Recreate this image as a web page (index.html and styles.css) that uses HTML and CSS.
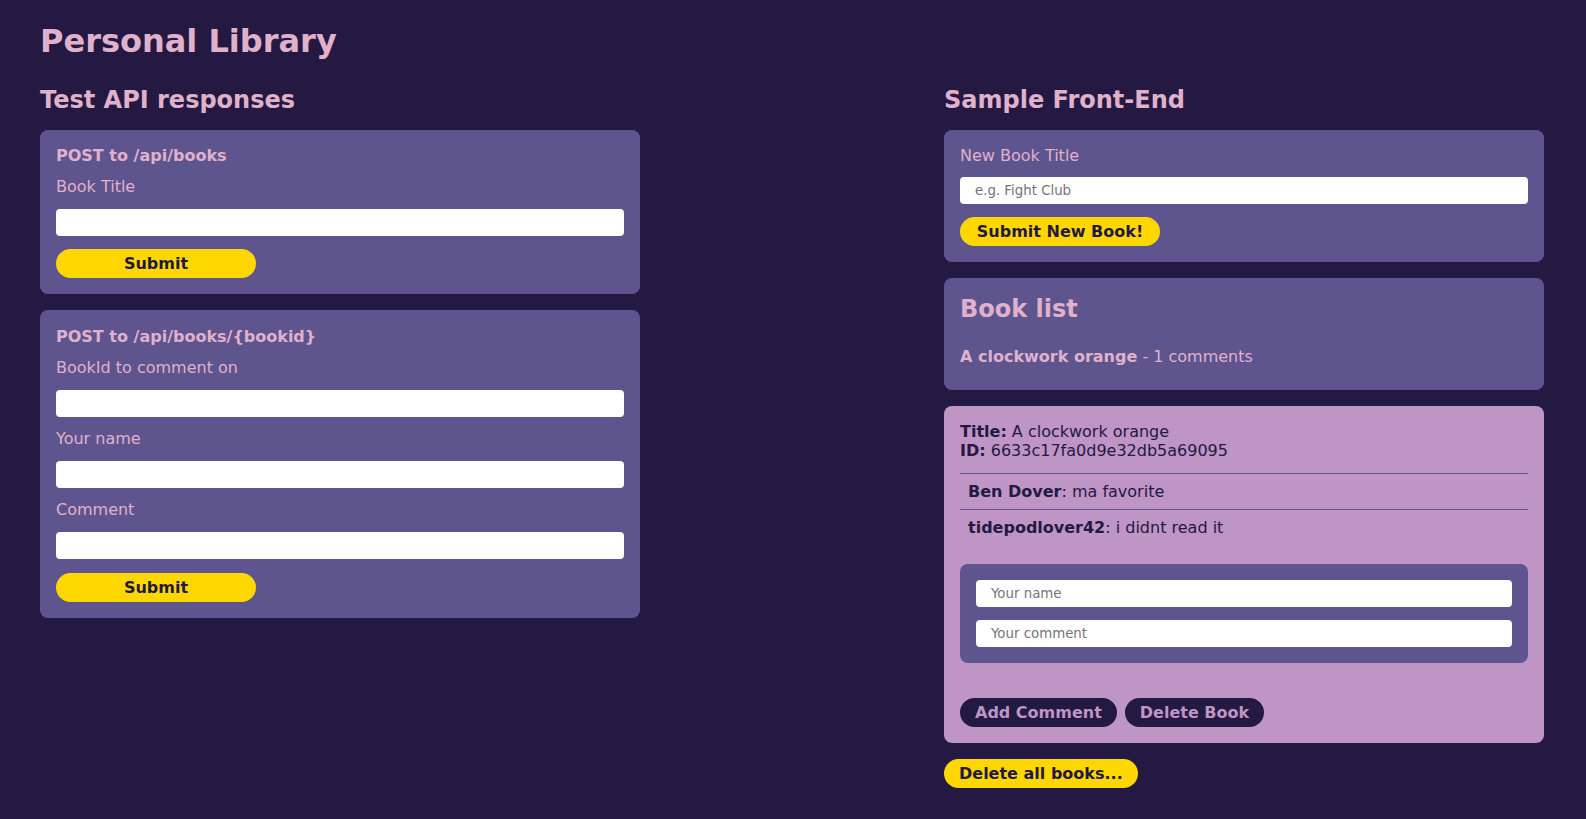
FILE: index.html
```html
<!DOCTYPE html>
<html lang="en">
<head>
<meta charset="utf-8">
<title>Personal Library</title>
<link rel="stylesheet" href="styles.css">
</head>
<body>
<h1 class="page-title">Personal Library</h1>
<div class="columns">
  <section class="column">
    <h2 class="col-title">Test API responses</h2>
    <form class="card">
      <h4 class="card-head">POST to /api/books</h4>
      <label class="field-label">Book Title</label>
      <input class="field" type="text">
      <button class="btn btn-yellow btn-wide" type="button">Submit</button>
    </form>
    <form class="card card-tall">
      <h4 class="card-head">POST to /api/books/{bookid}</h4>
      <label class="field-label">BookId to comment on</label>
      <input class="field" type="text">
      <label class="field-label">Your name</label>
      <input class="field" type="text">
      <label class="field-label">Comment</label>
      <input class="field" type="text">
      <button class="btn btn-yellow btn-wide" type="button">Submit</button>
    </form>
  </section>
  <section class="column">
    <h2 class="col-title">Sample Front-End</h2>
    <form class="card">
      <label class="field-label first">New Book Title</label>
      <input class="field field-new" type="text" placeholder="e.g. Fight Club">
      <div class="row"><button class="btn btn-yellow btn-min" type="button">Submit New Book!</button></div>
    </form>
    <div class="card">
      <h2 class="list-title">Book list</h2>
      <ul class="book-list">
        <li><b>A clockwork orange</b> - 1 comments</li>
      </ul>
    </div>
    <div class="card card-detail">
      <p class="detail"><b>Title:</b> A clockwork orange<br><b>ID:</b> 6633c17fa0d9e32db5a69095</p>
      <ul class="comments">
        <li><b>Ben Dover</b>: ma favorite</li>
        <li><b>tidepodlover42</b>: i didnt read it</li>
      </ul>
      <form class="comment-form">
        <input class="field" type="text" placeholder="Your name">
        <input class="field" type="text" placeholder="Your comment">
      </form>
      <div class="actions">
        <button class="btn btn-dark" type="button">Add Comment</button>
        <button class="btn btn-dark" type="button">Delete Book</button>
      </div>
    </div>
    <div class="row row-end"><button class="btn btn-yellow" type="button">Delete all books...</button></div>
  </section>
</div>
</body>
</html>
```
FILE: styles.css
```css
* { box-sizing: border-box; }
html, body { background: #231942; }
body {
  margin: 0;
  padding: 23px 42px 0 40px;
  font-family: "DejaVu Sans", sans-serif;
  font-size: 16px;
  color: #e0b1cb;
}
.page-title {
  margin: 0 0 26px;
  font-size: 32px;
  line-height: 37px;
  font-weight: bold;
}
.columns {
  display: flex;
  justify-content: space-between;
}
.column {
  width: 600px;
  display: flex;
  flex-direction: column;
}
.col-title {
  margin: 0 0 16px;
  font-size: 24px;
  line-height: 28px;
}
.card {
  background: #5e548e;
  border-radius: 8px;
  padding: 16px;
  margin: 0 0 16px;
  display: flex;
  flex-direction: column;
  align-items: flex-start;
}
.card-tall { padding-top: 17px; }
.card-tall .btn-wide { margin-top: 14px; }
.card-head {
  margin: 0;
  font-size: 16px;
  line-height: 19px;
  font-weight: bold;
}
.field-label {
  display: block;
  margin-top: 12px;
  line-height: 19px;
}
.field-label.first { margin-top: 0; }
.field {
  display: block;
  width: 100%;
  height: 27px;
  margin-top: 13px;
  border: none;
  border-radius: 4px;
  background: #fff;
  padding: 0 15px;
  font-family: "DejaVu Sans", sans-serif;
  font-size: 13.333px;
  color: #231942;
}
.field::placeholder { color: #757575; }
.field-new { margin-top: 12px; }
.btn {
  height: 29px;
  padding: 0 15px;
  border: none;
  border-radius: 15px;
  font-family: "DejaVu Sans", sans-serif;
  font-size: 16px;
  font-weight: bold;
  line-height: 29px;
}
.btn-yellow { background: #ffd700; color: #231942; }
.btn-wide { width: 200px; margin-top: 13px; }
.btn-min { min-width: 200px; }
.row { display: flex; margin-top: 13px; }
.list-title {
  margin: 1px 0 0;
  font-size: 24px;
  line-height: 28px;
}
.book-list {
  list-style: none;
  margin: 16px 0 0;
  padding: 8px 0;
  line-height: 19px;
}
.card-detail { background: #be95c4; color: #231942; align-items: stretch; }
.detail { margin: 0; line-height: 19px; }
.comments {
  list-style: none;
  margin: 13px 0 0;
  padding: 0;
  line-height: 19px;
}
.comments li {
  border-top: 1px solid #5e548e;
  padding: 8px;
}
.comment-form {
  background: #5e548e;
  border-radius: 8px;
  padding: 3px 16px 16px;
  margin-top: 19px;
}
.actions {
  display: flex;
  gap: 8px;
  margin-top: 35px;
}
.btn-dark { background: #231942; color: #be95c4; }
.column > .row-end { margin-top: 0; }
```
